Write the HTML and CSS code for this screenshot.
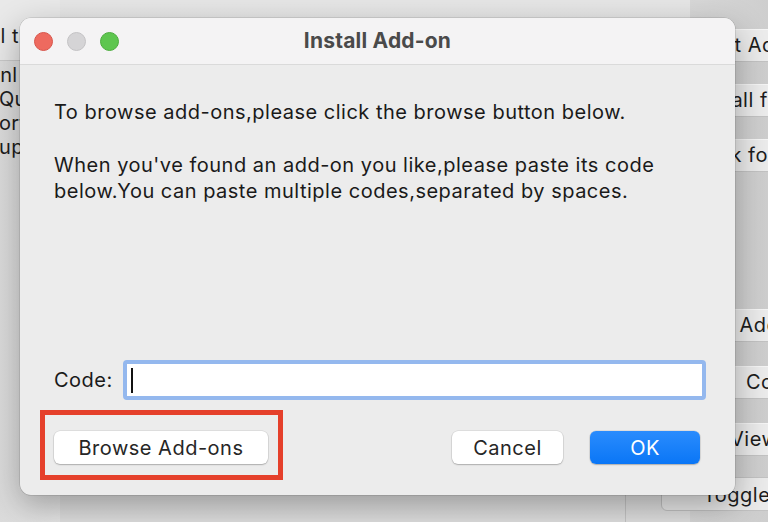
FILE: index.html
```html
<!DOCTYPE html>
<html>
<head>
<meta charset="utf-8">
<link rel="stylesheet" href="styles.css">
</head>
<body>
<div class="desktop">
  <div class="main-left">
    <div class="toolbar"><span class="tb-text">Install t</span></div>
    <ul class="list">
      <li class="li-1">Unl</li>
      <li>Qu</li>
      <li>ort</li>
      <li>up</li>
    </ul>
  </div>

  <div class="side-panel">
    <div class="side-top">
      <div class="side-btn b1"><span>Get Add-ons...</span></div>
      <div class="side-btn b2"><span>Install from file...</span></div>
      <div class="side-btn b3"><span>Check for Updates</span></div>
    </div>
    <div class="side-bottom">
      <div class="side-btn b4"><span>View Add-on Page</span></div>
      <div class="side-btn b5"><span>Config</span></div>
      <div class="side-btn b6"><span>View Files</span></div>
    </div>
  </div>
  <div class="toggle-btn"><span>Toggle Enabled</span></div>
  <div class="divider"></div>

  <div class="dialog">
    <div class="titlebar">
      <div class="lights">
        <span class="light red"></span>
        <span class="light grey"></span>
        <span class="light green"></span>
      </div>
      <div class="title">Install Add-on</div>
    </div>
    <div class="body">
      <p class="msg">To browse add-ons,please click the browse button below.</p>
      <p class="msg">When you've found an add-on you like,please paste its code below.You can paste multiple codes,separated by spaces.</p>
      <div class="spacer"></div>
      <div class="code-row">
        <label class="code-label">Code:</label>
        <div class="code-input"><span class="caret"></span></div>
      </div>
      <div class="btn-row">
        <button class="btn">Browse Add-ons</button>
        <div class="grow"></div>
        <button class="btn cancel">Cancel</button>
        <button class="btn ok">OK</button>
      </div>
    </div>
    <div class="highlight"></div>
  </div>
</div>
</body>
</html>
```

FILE: styles.css
```css
* { box-sizing: border-box; }
html, body { margin: 0; padding: 0; }
body {
  width: 768px;
  height: 522px;
  overflow: hidden;
  font-family: "Inter", "Liberation Sans", sans-serif;
  color: #1d1d1d;
  background: #e4e4e4;
}
.desktop {
  position: relative;
  width: 768px;
  height: 522px;
  overflow: hidden;
  background: linear-gradient(#e6e6e6, #e0e0e0);
}

/* left main window fragments */
.main-left {
  position: absolute;
  left: 0; top: 0;
  width: 60px; height: 522px;
  background: linear-gradient(90deg, #dcdcdc, #e8e8e8);
}
.toolbar {
  height: 61px;
  border-bottom: 1px solid #c9c9c9;
  background: #e9e9e9;
  position: relative;
}
.tb-text {
  position: absolute;
  left: -53px;
  top: 24px;
  font-size: 20px;
  letter-spacing: 0.5px;
  white-space: nowrap;
}
.list {
  list-style: none;
  margin: 0; padding: 2px 0 0 0;
  font-size: 20px;
  letter-spacing: 0.3px;
  line-height: 24px;
}
.list li { margin-left: -1px; white-space: nowrap; }
.list .li-1 { margin-left: -15px; }

/* right side panel */
.side-panel {
  position: absolute;
  left: 690px; top: 0;
  width: 78px; height: 522px;
  background: linear-gradient(90deg, #d8d8d8, #cecece);
}
.side-top { padding-top: 29px; display: flex; flex-direction: column; gap: 22px; }
.side-bottom { padding-top: 137px; display: flex; flex-direction: column; gap: 24px; }
.side-btn {
  height: 33px;
  background: #ececec;
  border-top: 1px solid #f6f6f6;
  border-bottom: 1px solid #c3c3c3;
  font-size: 20px;
  letter-spacing: 0.5px;
  line-height: 31px;
  white-space: nowrap;
  overflow: hidden;
  position: relative;
}
.side-btn span { position: absolute; top: 0; }
.b1 span { left: 17px; }
.b2 span { left: 5px; }
.b3 span { left: -11px; }
.b4 span { left: -5px; }
.b5 span { left: 56px; }
.b6 span { left: 40px; }

.toggle-btn {
  position: absolute;
  left: 661px; top: 477px;
  width: 140px; height: 34px;
  background: #ebebeb;
  border: 1px solid #c3c3c3;
  border-radius: 6px;
  font-size: 20px;
  letter-spacing: 0.5px;
  line-height: 34px;
  white-space: nowrap;
  overflow: hidden;
}
.toggle-btn span { margin-left: 41px; }
.divider {
  position: absolute;
  left: 625px; top: 480px;
  width: 1px; height: 42px;
  background: #c6c6c6;
}

/* dialog */
.dialog {
  position: absolute;
  left: 20px; top: 18px;
  width: 715px; height: 477px;
  border-radius: 11px;
  background: #ececec;
  box-shadow: 0 0 0 0.5px rgba(0,0,0,0.18), 0 12px 34px rgba(0,0,0,0.32);
  display: flex;
  flex-direction: column;
  overflow: hidden;
}
.titlebar {
  height: 47px;
  flex: none;
  background: #f4f3f4;
  border-bottom: 1px solid #dadada;
  display: flex;
  align-items: center;
  position: relative;
}
.lights { display: flex; gap: 14px; padding-left: 14px; }
.light { width: 19px; height: 19px; border-radius: 50%; display: block; }
.red { background: #ee6a5f; border: 0.5px solid #d8554b; }
.grey { background: #d5d4d6; border: 0.5px solid #c4c3c5; }
.green { background: #5ec64f; border: 0.5px solid #4cad3e; }
.title {
  position: absolute;
  left: 0; right: 0; top: 0; bottom: 0;
  text-align: center;
  line-height: 46px;
  font-weight: 700;
  font-size: 21px;
  letter-spacing: 0.2px;
  color: #4a4a4a;
}
.body {
  flex: 1;
  display: flex;
  flex-direction: column;
  padding: 34px 29px 31px 34px;
  font-size: 20px;
  letter-spacing: 0.5px;
}
.msg {
  margin: 0 0 27px 0;
  line-height: 26px;
  color: #1a1a1a;
  max-width: 610px;
}
.spacer { flex: 1; }
.code-row { display: flex; align-items: center; gap: 10px; height: 40px; }
.code-label { color: #1a1a1a; }
.code-input {
  flex: 1;
  height: 40px;
  border: 4px solid #94b8ee;
  border-radius: 4px;
  background: #fff;
  display: flex;
  align-items: center;
  padding-left: 4px;
}
.caret { width: 2px; height: 25px; background: #111; }
.btn-row { display: flex; align-items: center; margin-top: 31px; margin-right: 6px; gap: 27px; }
.grow { flex: 1; }
.btn {
  height: 33px;
  border: none;
  border-radius: 6px;
  background: #fff;
  box-shadow: 0 0 0 0.5px rgba(0,0,0,0.12), 0 1px 1.5px rgba(0,0,0,0.22);
  font-family: inherit;
  font-size: 20px;
  letter-spacing: 0.5px;
  color: #262626;
  padding: 0;
  width: 214px;
}
.cancel { width: 111px; }
.ok {
  width: 110px;
  color: #fff;
  background: linear-gradient(#2a8cfd, #0a76f6);
}
.highlight {
  position: absolute;
  left: 20px; top: 392px;
  width: 243px; height: 70px;
  border: 5px solid #e5402b;
}
```
